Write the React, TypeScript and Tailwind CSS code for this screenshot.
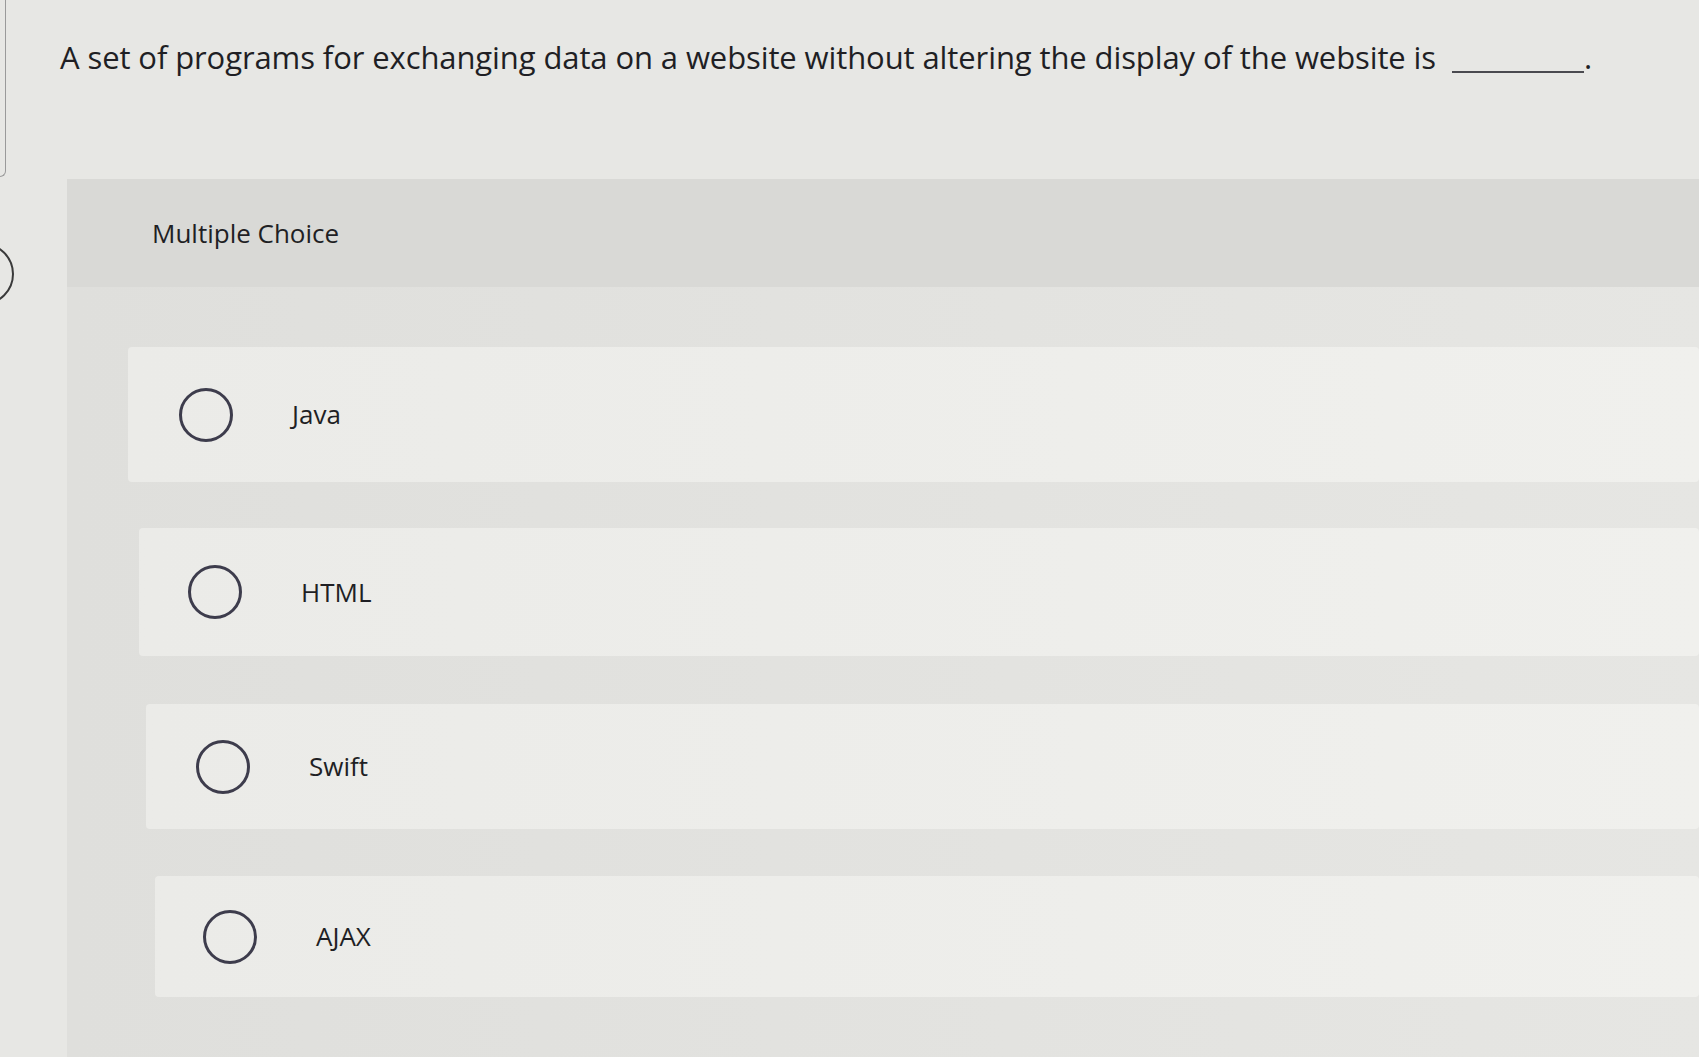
import React from "react";

const options = [
  { label: "Java", card: "ml-[61px] h-[135px] pl-[51px]", gap: "mt-[60px]" },
  { label: "HTML", card: "ml-[72px] h-[128px] pl-[49px]", gap: "mt-[46px]" },
  { label: "Swift", card: "ml-[79px] h-[125px] pl-[50px]", gap: "mt-[48px]" },
  { label: "AJAX", card: "ml-[88px] h-[121px] pl-[48px]", gap: "mt-[47px]" },
];

export default function App() {
  return (
    <div className="relative min-h-[1057px] w-full overflow-hidden bg-[#e7e7e4] font-['Open_Sans',sans-serif] text-[#1f1f24]">
      {/* left-edge artifacts */}
      <div className="absolute left-[-10px] top-[-10px] h-[187px] w-[16px] rounded-br-[6px] border-r-[1.5px] border-b-[1.5px] border-[#9a9a9a]" />
      <div className="absolute left-[-48px] top-[243px] h-[62px] w-[62px] rounded-full border-[2px] border-[#3a3a3a]" />

      <div className="pl-[60px] pt-[37px]">
        <p className="text-[31px] leading-[40px] tracking-[-0.1px]">
          A set of programs for exchanging data on a website without altering the display of the website is
          <span className="ml-[16px] inline-block w-[132px] translate-y-[4px] border-b-2 border-[#4a4a4f]" />
          <span>.</span>
        </p>
      </div>

      <div className="ml-[67px] mt-[102px] min-h-[878px] bg-gradient-to-r from-[#dfdfdc] to-[#e6e6e3]">
        <div className="flex h-[108px] items-center bg-[#d9d9d6] pl-[85px]">
          <span className="text-[26px] text-[#1f1f24]">Multiple Choice</span>
        </div>
        <div className="flex flex-col pb-[60px]">
          {options.map((o) => (
            <div key={o.label} className={`${o.gap} ${o.card} flex items-center rounded-[4px] bg-gradient-to-r from-[#ebebe8] to-[#f0f0ed]`}>
              <span className="h-[54px] w-[54px] shrink-0 rounded-full border-[3px] border-[#3d3c4c]" />
              <span className="ml-[59px] text-[26px] text-[#1f1f24]">{o.label}</span>
            </div>
          ))}
        </div>
      </div>
    </div>
  );
}
